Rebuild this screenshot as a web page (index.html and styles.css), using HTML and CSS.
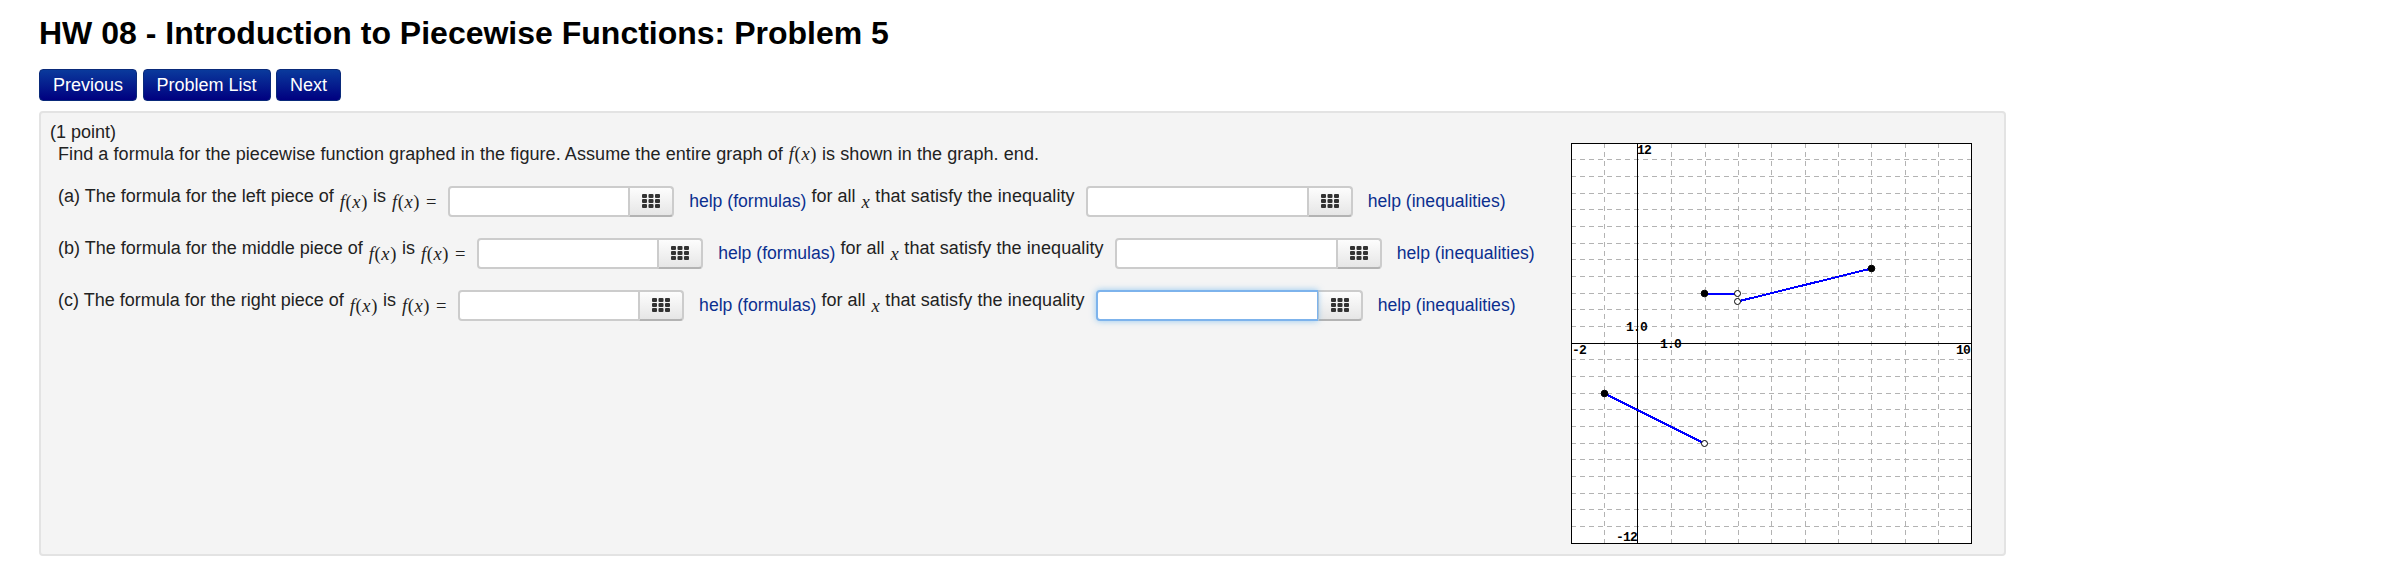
FILE: index.html
```html
<!DOCTYPE html>
<html lang="en">
<head>
  <meta charset="UTF-8" />
  <title>HW 08 - Introduction to Piecewise Functions: Problem 5</title>
  <link rel="stylesheet" href="styles.css">
</head>
<body>
  <h1>HW 08 - Introduction to Piecewise Functions: Problem 5</h1>

  <div class="nav">
    <a class="nav-btn">Previous</a>
    <a class="nav-btn">Problem List</a>
    <a class="nav-btn">Next</a>
  </div>

  <div class="problem">
    <div class="problem-text">
      <div class="points">(1 point)</div>
      <div class="intro">Find a formula for the piecewise function graphed in the figure. Assume the entire graph of <span class="math"><i>f</i>(<i>x</i>)</span> is shown in the graph. end.</div>

      <div class="row">
        <span class="up">(a) The formula for the left piece of</span>
        <span class="math"><i>f</i>(<i>x</i>)</span>
        <span class="up">is</span>
        <span class="math"><i>f</i>(<i>x</i>)<span class="eq">=</span></span>
        <span class="answer"><input class="answer-in formula" type="text" /><button class="grid-btn"><svg class="grid-icon" viewBox="0 0 18 14"><use href="#cells" /></svg></button></span>
        <a class="help">help (formulas)</a>
        <span class="up">for all</span>
        <span class="math"><i>x</i></span>
        <span class="up wide">that satisfy the inequality</span>
        <span class="answer"><input class="answer-in ineq" type="text" /><button class="grid-btn"><svg class="grid-icon" viewBox="0 0 18 14"><use href="#cells" /></svg></button></span>
        <a class="help">help (inequalities)</a>
      </div>

      <div class="row">
        <span class="up">(b) The formula for the middle piece of</span>
        <span class="math"><i>f</i>(<i>x</i>)</span>
        <span class="up">is</span>
        <span class="math"><i>f</i>(<i>x</i>)<span class="eq">=</span></span>
        <span class="answer"><input class="answer-in formula" type="text" /><button class="grid-btn"><svg class="grid-icon" viewBox="0 0 18 14"><use href="#cells" /></svg></button></span>
        <a class="help">help (formulas)</a>
        <span class="up">for all</span>
        <span class="math"><i>x</i></span>
        <span class="up wide">that satisfy the inequality</span>
        <span class="answer"><input class="answer-in ineq" type="text" /><button class="grid-btn"><svg class="grid-icon" viewBox="0 0 18 14"><use href="#cells" /></svg></button></span>
        <a class="help">help (inequalities)</a>
      </div>

      <div class="row">
        <span class="up">(c) The formula for the right piece of</span>
        <span class="math"><i>f</i>(<i>x</i>)</span>
        <span class="up">is</span>
        <span class="math"><i>f</i>(<i>x</i>)<span class="eq">=</span></span>
        <span class="answer"><input class="answer-in formula" type="text" /><button class="grid-btn"><svg class="grid-icon" viewBox="0 0 18 14"><use href="#cells" /></svg></button></span>
        <a class="help">help (formulas)</a>
        <span class="up">for all</span>
        <span class="math"><i>x</i></span>
        <span class="up wide">that satisfy the inequality</span>
        <span class="answer"><input class="answer-in ineq focused" type="text" /><button class="grid-btn"><svg class="grid-icon" viewBox="0 0 18 14"><use href="#cells" /></svg></button></span>
        <a class="help">help (inequalities)</a>
      </div>
    </div>

    <svg class="graph" width="401" height="401" viewBox="0 0 401 401" shape-rendering="crispEdges">
      <defs>
        <g id="cells" fill="#333">
          <rect x="0" y="0" width="5" height="4" rx="1" /><rect x="6.5" y="0" width="5" height="4" rx="1" /><rect x="13" y="0" width="5" height="4" rx="1" />
          <rect x="0" y="5" width="5" height="4" rx="1" /><rect x="6.5" y="5" width="5" height="4" rx="1" /><rect x="13" y="5" width="5" height="4" rx="1" />
          <rect x="0" y="10" width="5" height="4" rx="1" /><rect x="6.5" y="10" width="5" height="4" rx="1" /><rect x="13" y="10" width="5" height="4" rx="1" />
        </g>
      </defs>
      <rect x="0.5" y="0.5" width="400" height="400" fill="#fff" />
      <g stroke="#b3b3b3" stroke-dasharray="5 4" fill="none">
        <path d="M33.5 0V400M100.5 0V400M134.5 0V400M167.5 0V400M200.5 0V400M234.5 0V400M267.5 0V400M300.5 0V400M334.5 0V400M367.5 0V400" />
        <path d="M0 16.5H400M0 33.5H400M0 50.5H400M0 66.5H400M0 83.5H400M0 100.5H400M0 116.5H400M0 133.5H400M0 150.5H400M0 166.5H400M0 183.5H400M0 216.5H400M0 233.5H400M0 250.5H400M0 266.5H400M0 283.5H400M0 300.5H400M0 316.5H400M0 333.5H400M0 350.5H400M0 366.5H400M0 383.5H400" />
      </g>
      <g stroke="#000" fill="none">
        <path d="M66.5 0V400M0 200.5H400" />
        <rect x="0.5" y="0.5" width="400" height="400" />
      </g>
      <g class="graph-label">
        <text x="66" y="11">12</text>
        <text x="55" y="188">1.0</text>
        <text x="89" y="205">1.0</text>
        <text x="1" y="211">-2</text>
        <text x="385" y="211">10</text>
        <text x="45" y="398">-12</text>
      </g>
      <g stroke="#0000ff" stroke-width="2" fill="none">
        <path d="M33.5 250.5L133.5 300.5" />
        <path d="M133.5 150.5H166.5" />
        <path d="M166.5 158.5L300.5 125.5" />
      </g>
      <g shape-rendering="auto">
        <circle cx="33.5" cy="250.5" r="3.3" fill="#000" stroke="#000" />
        <circle cx="133.5" cy="150.5" r="3.3" fill="#000" stroke="#000" />
        <circle cx="300.5" cy="125.5" r="3.3" fill="#000" stroke="#000" />
        <circle cx="133.5" cy="300.5" r="3" fill="#fff" stroke="#000" />
        <circle cx="166.5" cy="150.5" r="3" fill="#fff" stroke="#000" />
        <circle cx="166.5" cy="158.5" r="3" fill="#fff" stroke="#000" />
      </g>
    </svg>
  </div>
</body>
</html>
```

FILE: styles.css
```css
body {
  margin: 0;
  padding: 0 0 0 39px;
  background-color: #fff;
  color: #222;
  font-family: "Liberation Sans", Arial, sans-serif;
  font-size: 18px;
}
h1 {
  margin: 0;
  padding-top: 15px;
  font-size: 32px;
  line-height: 36px;
  font-weight: bold;
  color: #000;
}
.nav {
  display: flex;
  gap: 5.5px;
  margin-top: 18px;
}
.nav-btn {
  box-sizing: border-box;
  height: 32px;
  padding: 0 13px;
  line-height: 30px;
  color: #fff;
  border: 1px solid #0a2a7a;
  border-radius: 4px;
  background: linear-gradient(#0a3a9c, #000080);
}
.problem {
  box-sizing: border-box;
  display: flex;
  justify-content: space-between;
  width: 1967px;
  height: 445px;
  margin-top: 10px;
  padding: 9px 32px 9px 9px;
  background-color: #f4f4f4;
  border: 2px solid #e3e3e3;
  border-radius: 4px;
}
.problem-text {
  flex: 1;
}
.points {
  line-height: 21px;
}
.intro {
  padding: 1px 0 0 8px;
  margin-bottom: 16px;
  line-height: 21px;
  letter-spacing: 0.07px;
}
.row {
  padding-left: 8px;
  margin-top: 14px;
  height: 38px;
  line-height: 38px;
  white-space: nowrap;
}
.up {
  position: relative;
  top: -4px;
}
.wide {
  letter-spacing: 0.08px;
}
.math {
  font-family: "Liberation Serif", "Times New Roman", serif;
  font-size: 18.5px;
  letter-spacing: 0.6px;
}
.math i:first-child {
  margin-left: 1px;
}
.row .math {
  position: relative;
  top: 2px;
}
.eq {
  margin-left: 6px;
}
.answer {
  display: inline-flex;
  vertical-align: middle;
  margin: 0 10px 0 6px;
}
.answer-in {
  box-sizing: border-box;
  height: 31px;
  margin: 0;
  background: #fff;
  border: 2px solid #ccc;
  border-right: 1px solid #ccc;
  border-radius: 4px 0 0 4px;
  outline: none;
}
.formula {
  width: 181px;
}
.ineq {
  width: 222px;
}
.focused {
  border-color: #7db3ec;
  box-shadow: 0 0 6px rgba(82, 168, 236, 0.6);
  position: relative;
}
.grid-btn {
  box-sizing: border-box;
  width: 45px;
  height: 31px;
  margin: 0;
  padding: 0;
  background: linear-gradient(#fdfdfd, #e6e6e6);
  border: 2px solid #ccc;
  border-left: 1px solid #ccc;
  border-bottom-color: #b3b3b3;
  border-radius: 0 4px 4px 0;
}
.grid-icon {
  display: block;
  width: 18px;
  height: 14px;
  margin: 0 auto;
}
.help {
  position: relative;
  top: 1px;
  color: #0b2f8f;
  font-size: 17.6px;
}
.graph {
  flex: none;
  margin-top: 21px;
}
.graph-label text {
  font-family: "Liberation Mono", monospace;
  font-size: 13px;
  font-weight: bold;
  letter-spacing: -0.8px;
  fill: #000;
}
```
